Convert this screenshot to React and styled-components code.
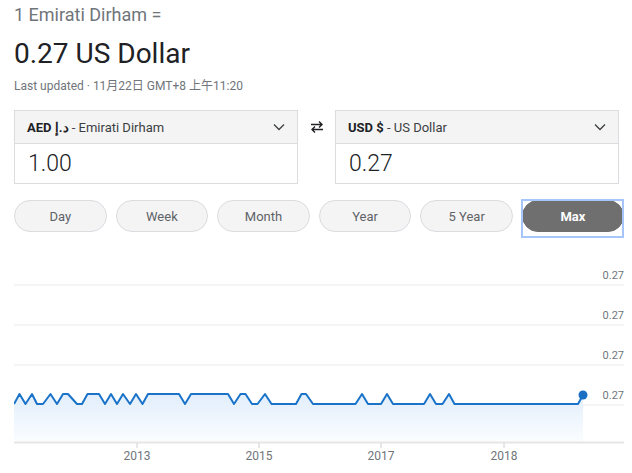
import React from "react";
import styled, { createGlobalStyle } from "styled-components";

const GlobalStyle = createGlobalStyle`
  body {
    margin: 0;
    background: #ffffff;
    font-family: Roboto, "Noto Sans CJK SC", "Liberation Sans", sans-serif;
    color: #202124;
  }
`;

const Page = styled.div`
  width: 610px;
  padding: 0 8px 0 14px;
`;

const Intro = styled.div`
  font-size: 18px;
  line-height: 24px;
  color: #70757a;
  padding-top: 3px;
`;

const Result = styled.div`
  font-size: 28px;
  line-height: 36px;
  color: #202124;
  margin-top: 9px;
`;

const Updated = styled.div`
  font-size: 12px;
  line-height: 16px;
  color: #70757a;
  margin-top: 6px;
`;

const Converter = styled.div`
  display: grid;
  grid-template-columns: 284px 37px 284px;
  margin-top: 16px;
`;

const Box = styled.div`
  border: 1px solid #dadce0;
  display: flex;
  flex-direction: column;
`;

const BoxHead = styled.div`
  height: 32px;
  background: #f4f4f4;
  border-bottom: 1px solid #dadce0;
  display: flex;
  align-items: center;
  justify-content: space-between;
  padding: 0 12px 0 12px;
  font-size: 13px;
  color: #3c4043;
`;

const Code = styled.b`
  color: #202124;
  font-weight: 700;
`;

const Amount = styled.div`
  height: 39px;
  display: flex;
  align-items: center;
  padding: 0 13px;
  font-size: 23px;
  font-weight: 300;
  color: #202124;
`;

const Swap = styled.div`
  display: flex;
  justify-content: center;
  padding-top: 10px;
`;

const Ranges = styled.div`
  display: flex;
  gap: 9px;
  margin-top: 16px;
  height: 39px;
`;

const Range = styled.button`
  flex: ${(p) => (p.$active ? "0 0 102px" : "1 1 0")};
  height: 32px;
  border-radius: 16px;
  border: 1px solid ${(p) => (p.$active ? "#6f6f6f" : "#dadce0")};
  background: ${(p) => (p.$active ? "#6f6f6f" : "#f4f4f4")};
  color: ${(p) => (p.$active ? "#ffffff" : "#5f6368")};
  font-family: Roboto, "Liberation Sans", sans-serif;
  font-size: 13px;
  font-weight: ${(p) => (p.$active ? 700 : 400)};
  padding: 0;
  position: relative;
  cursor: pointer;
  &::after {
    content: "";
    display: ${(p) => (p.$active ? "block" : "none")};
    position: absolute;
    left: -2px;
    top: -2px;
    right: -1px;
    bottom: -7px;
    border: 2px solid #a6c5fa;
  }
`;

const Chart = styled.svg`
  display: block;
  margin-top: 12px;
`;

const Chevron = () => (
  <svg width="12" height="8" viewBox="0 0 12 8">
    <path d="M1 1.5 L6 6.5 L11 1.5" fill="none" stroke="#3c4043" strokeWidth="1.3" />
  </svg>
);

const SwapIcon = () => (
  <svg width="14" height="14" viewBox="0 0 14 14">
    <path
      d="M1 4.5 H12 M9 1.5 L12 4.5 L9 7.5 M13 9.5 H2 M5 6.5 L2 9.5 L5 12.5"
      fill="none"
      stroke="#202124"
      strokeWidth="1.4"
    />
  </svg>
);

const linePoints = [
  [14, 403], [19.5, 393], [25.5, 403], [32, 393], [37, 403], [43, 403],
  [50.5, 393], [57, 403], [63, 393], [68, 393], [77, 403], [82, 403],
  [87.5, 393], [99, 393], [105, 403], [111, 393], [117, 403], [123, 393],
  [130, 403], [136, 393], [142.5, 403], [148, 393], [179, 393], [185, 403],
  [191, 393], [228, 393], [234, 403], [240.5, 393], [245.5, 393], [252, 403],
  [257.5, 403], [265, 393], [271.5, 403], [296, 403], [301.5, 393], [306, 393],
  [313, 403], [355.5, 403], [362, 393], [368, 403], [381, 403], [387, 393],
  [393, 403], [424, 403], [430, 393], [436, 403], [442.5, 403], [449, 393],
  [454.5, 403], [578, 403], [583, 394],
];

const ranges = ["Day", "Week", "Month", "Year", "5 Year", "Max"];
const grid = [284, 324, 364, 404];
const years = [
  [137, "2013"],
  [259, "2015"],
  [381, "2017"],
  [504, "2018"],
];

const RateChart = () => {
  const line = linePoints.map(([x, y], i) => `${i ? "L" : "M"}${x} ${y}`).join(" ");
  const area = `${line} L583 441 L14 441 Z`;
  return (
    <Chart width="610" height="212" viewBox="14 250 610 212">
      <defs>
        <linearGradient id="fade" x1="0" y1="0" x2="0" y2="1">
          <stop offset="0" stopColor="#e1eefb" />
          <stop offset="1" stopColor="#fbfdff" />
        </linearGradient>
      </defs>
      {grid.map((y) => (
        <g key={y}>
          <line x1="14" x2="624" y1={y} y2={y} stroke="#ebebeb" strokeWidth="1" />
          <text x="624" y={y - 6} textAnchor="end" fontSize="11" fill="#70757a"
            fontFamily="Roboto, 'Liberation Sans', sans-serif">0.27</text>
        </g>
      ))}
      <path d={area} fill="url(#fade)" />
      <line x1="14" x2="624" y1="441.5" y2="441.5" stroke="#e6e6e6" strokeWidth="2" />
      {years.map(([x, label]) => (
        <g key={label}>
          <line x1={x} x2={x} y1="442" y2="447" stroke="#d0d0d0" strokeWidth="1" />
          <text x={x} y="459" textAnchor="middle" fontSize="12" fill="#70757a"
            fontFamily="Roboto, 'Liberation Sans', sans-serif">{label}</text>
        </g>
      ))}
      <path d={line} fill="none" stroke="#1a73c8" strokeWidth="2" strokeLinejoin="round" />
      <circle cx="583" cy="394" r="4.5" fill="#1a6fc4" />
    </Chart>
  );
};

const App = () => {
  return (
    <>
      <GlobalStyle />
      <Page>
        <Intro>1 Emirati Dirham =</Intro>
        <Result>0.27 US Dollar</Result>
        <Updated>Last updated · 11月22日 GMT+8 上午11:20</Updated>

        <Converter>
          <Box>
            <BoxHead>
              <span>
                <Code>AED د.إ</Code> - Emirati Dirham
              </span>
              <Chevron />
            </BoxHead>
            <Amount>1.00</Amount>
          </Box>
          <Swap>
            <SwapIcon />
          </Swap>
          <Box>
            <BoxHead>
              <span>
                <Code>USD $</Code> - US Dollar
              </span>
              <Chevron />
            </BoxHead>
            <Amount>0.27</Amount>
          </Box>
        </Converter>

        <Ranges>
          {ranges.map((r) => (
            <Range key={r} $active={r === "Max"}>
              {r}
            </Range>
          ))}
        </Ranges>

        <RateChart />
      </Page>
    </>
  );
};

export default App;
